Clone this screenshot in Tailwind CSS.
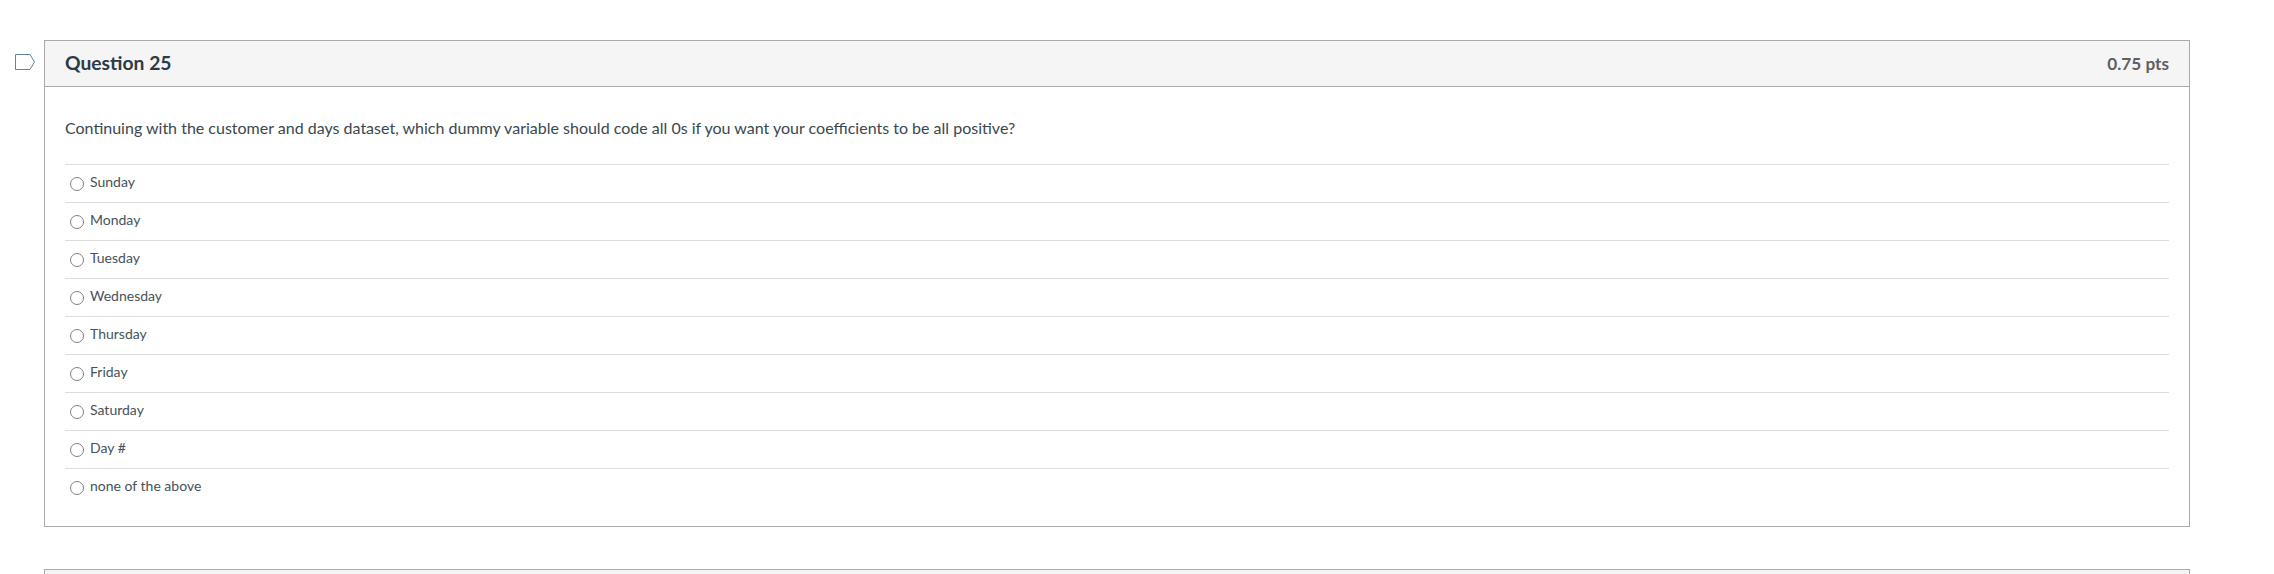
<!DOCTYPE html>
<html lang="en">

<head>
    <meta charset="UTF-8">
    <meta name="viewport" content="width=device-width, initial-scale=1.0">
    <script src="https://cdn.jsdelivr.net/npm/@tailwindcss/browser@4"></script>
    <title>Quiz</title>
</head>

<body class="h-[574px] overflow-hidden bg-white font-['Lato',sans-serif] text-[#3a474f]">

    <main class="pt-10 pl-[14px] pr-[84px] flex">
        <div class="w-[30px] shrink-0 pt-[13px]">
            <svg width="22" height="18" viewBox="0 0 22 18" fill="none" class="block">
                <path d="M1.5 1.5H16L20.5 9L16 16.5H1.5Z" stroke="#5f83a3" stroke-width="1" />
            </svg>
        </div>

        <div class="flex-1 min-w-0">
            <!-- question 25 -->
            <section class="border border-[#aaaaaa] h-[487px]">
                <div class="h-[45px] bg-[#f5f5f5] border-b border-[#aaaaaa] px-5 flex items-center justify-between box-content">
                    <h2 class="text-[19.3px] font-bold text-[#2d3b45]">Question 25</h2>
                    <span class="text-[17.2px] font-bold text-[#5f5f5f]">0.75 pts</span>
                </div>

                <div class="px-5">
                    <p class="h-[77px] pt-[31px] text-[16px] leading-[20px]">Continuing with the customer and days dataset, which dummy variable should code all 0s if you want your coefficients to be all positive?</p>

                    <div class="flex flex-col text-[#46525a]">
                        <label class="h-[38px] border-t border-[#dddddd] flex items-center gap-[6px] pl-[5px] text-[14px]">
                            <span class="w-[14px] h-[14px] mt-[1px] rounded-full border border-[#808080]"></span><span class="-mt-[4px]">Sunday</span>
                        </label>
                        <label class="h-[38px] border-t border-[#dddddd] flex items-center gap-[6px] pl-[5px] text-[14px]">
                            <span class="w-[14px] h-[14px] mt-[1px] rounded-full border border-[#808080]"></span><span class="-mt-[4px]">Monday</span>
                        </label>
                        <label class="h-[38px] border-t border-[#dddddd] flex items-center gap-[6px] pl-[5px] text-[14px]">
                            <span class="w-[14px] h-[14px] mt-[1px] rounded-full border border-[#808080]"></span><span class="-mt-[4px]">Tuesday</span>
                        </label>
                        <label class="h-[38px] border-t border-[#dddddd] flex items-center gap-[6px] pl-[5px] text-[14px]">
                            <span class="w-[14px] h-[14px] mt-[1px] rounded-full border border-[#808080]"></span><span class="-mt-[4px]">Wednesday</span>
                        </label>
                        <label class="h-[38px] border-t border-[#dddddd] flex items-center gap-[6px] pl-[5px] text-[14px]">
                            <span class="w-[14px] h-[14px] mt-[1px] rounded-full border border-[#808080]"></span><span class="-mt-[4px]">Thursday</span>
                        </label>
                        <label class="h-[38px] border-t border-[#dddddd] flex items-center gap-[6px] pl-[5px] text-[14px]">
                            <span class="w-[14px] h-[14px] mt-[1px] rounded-full border border-[#808080]"></span><span class="-mt-[4px]">Friday</span>
                        </label>
                        <label class="h-[38px] border-t border-[#dddddd] flex items-center gap-[6px] pl-[5px] text-[14px]">
                            <span class="w-[14px] h-[14px] mt-[1px] rounded-full border border-[#808080]"></span><span class="-mt-[4px]">Saturday</span>
                        </label>
                        <label class="h-[38px] border-t border-[#dddddd] flex items-center gap-[6px] pl-[5px] text-[14px]">
                            <span class="w-[14px] h-[14px] mt-[1px] rounded-full border border-[#808080]"></span><span class="-mt-[4px]">Day #</span>
                        </label>
                        <label class="h-[38px] border-t border-[#dddddd] flex items-center gap-[6px] pl-[5px] text-[14px]">
                            <span class="w-[14px] h-[14px] mt-[1px] rounded-full border border-[#808080]"></span><span class="-mt-[4px]">none of the above</span>
                        </label>
                    </div>
                </div>
            </section>

            <!-- next question, cut off by the window -->
            <section class="mt-[42px] border-t border-x border-[#aaaaaa] h-[5px] bg-[#f5f5f5]"></section>
        </div>
    </main>

</body>

</html>
